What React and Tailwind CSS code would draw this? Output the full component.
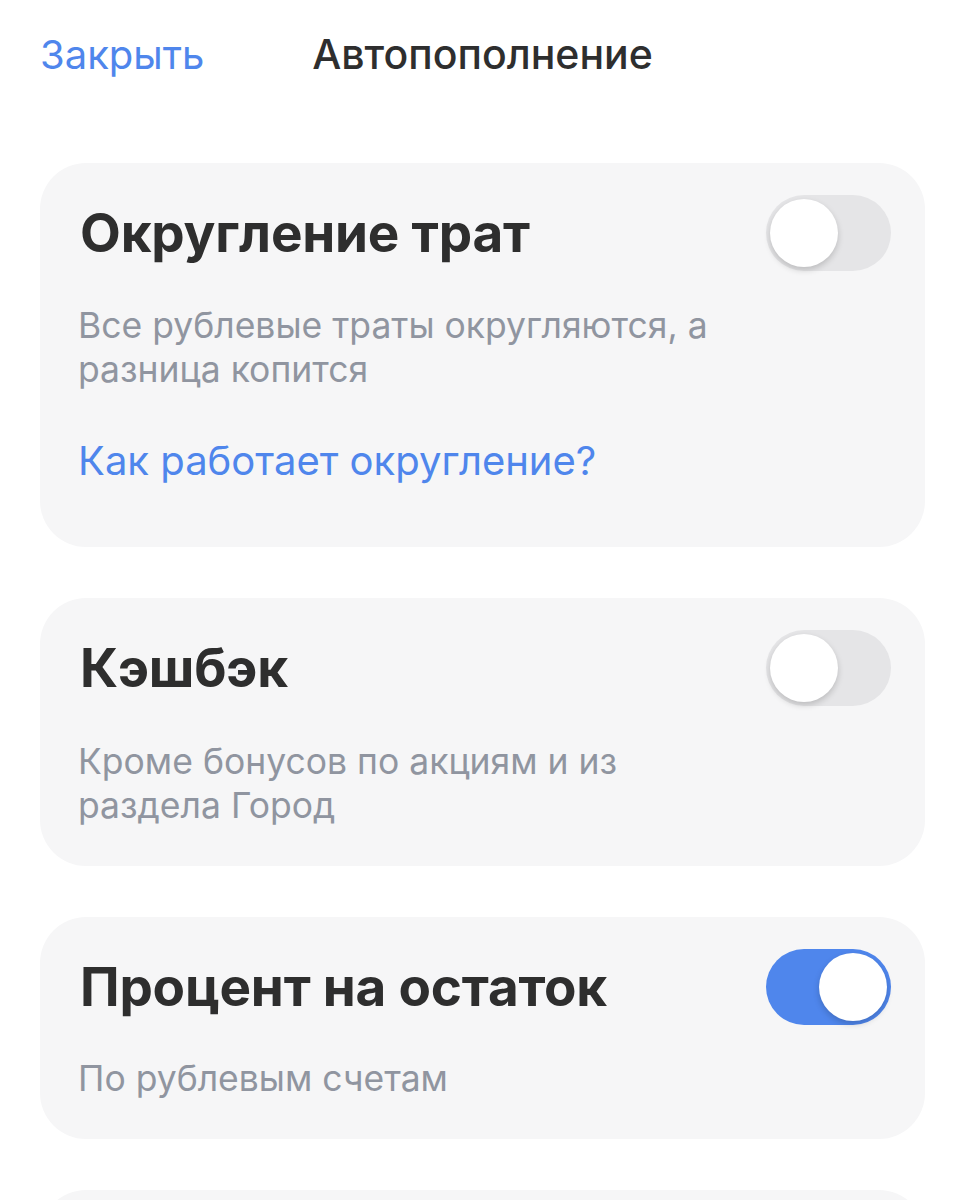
import { useState } from 'react';

const Toggle = ({ on, onChange }) => (
  <button
    onClick={onChange}
    className={`relative w-[125px] h-[76px] rounded-full shrink-0 transition-colors ${
      on ? 'bg-[#4f86ec]' : 'bg-[#e5e5e7]'
    }`}
  >
    <span
      className={`absolute top-[4px] w-[68px] h-[68px] rounded-full bg-white shadow-[0_3px_6px_rgba(0,0,0,0.18)] transition-all ${
        on ? 'left-[53px]' : 'left-[4px]'
      }`}
    />
  </button>
);

const Card = ({ title, description, link, on, onToggle, bodyGap, bottomPad }) => (
  <div className={`bg-[#f6f6f7] rounded-[46px] pt-[32px] pl-10 pr-[34px] ${bottomPad}`}>
    <div className="flex items-center justify-between">
      <h2 className="text-[53px] leading-none font-bold text-[#2e2e2e] tracking-[-0.2px]">{title}</h2>
      <Toggle on={on} onChange={onToggle} />
    </div>
    <p className={`${bodyGap} text-[35.5px] leading-[44px] text-[#9095a0] max-w-[665px] -ml-[2px]`}>
      {description}
    </p>
    {link && (
      <a href="#" className="block mt-[47px] -ml-[2px] text-[40px] leading-[44px] text-[#4f86ec]">
        {link}
      </a>
    )}
  </div>
);

export default function App() {
  const [settings, setSettings] = useState({ rounding: false, cashback: false, interest: true });

  const flip = (key) => setSettings((prev) => ({ ...prev, [key]: !prev[key] }));

  return (
    <div className="min-h-screen bg-white px-10 font-['Inter','Noto_Sans',sans-serif]">
      {/* Header */}
      <div className="relative h-[110px] flex items-center justify-center">
        <button className="absolute left-0 text-[40px] text-[#4f86ec]">Закрыть</button>
        <h1 className="text-[41px] font-medium text-[#2e2e2e]">Автопополнение</h1>
      </div>

      <div className="mt-[53px] flex flex-col gap-[51px]">
        <Card
          title="Округление трат"
          description="Все рублевые траты округляются, а разница копится"
          link="Как работает округление?"
          on={settings.rounding}
          onToggle={() => flip('rounding')}
          bodyGap="mt-[33px]"
          bottomPad="pb-[64px]"
        />
        <Card
          title="Кэшбэк"
          description="Кроме бонусов по акциям и из раздела Город"
          on={settings.cashback}
          onToggle={() => flip('cashback')}
          bodyGap="mt-[34px]"
          bottomPad="pb-[38px] pt-[30px]"
        />
        <Card
          title="Процент на остаток"
          description="По рублевым счетам"
          on={settings.interest}
          onToggle={() => flip('interest')}
          bodyGap="mt-[32px]"
          bottomPad="pb-[38px]"
        />
        <div className="bg-[#f6f6f7] rounded-[46px] h-[200px]" />
      </div>
    </div>
  );
}
